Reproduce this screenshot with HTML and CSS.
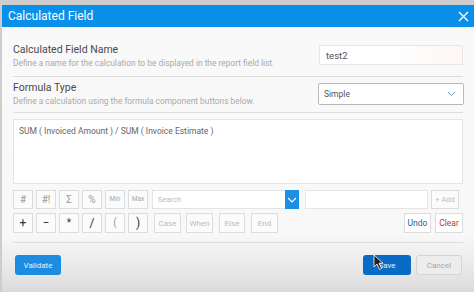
FILE: index.html
```html
<!DOCTYPE html>
<html lang="en">
<head>
    <meta charset="UTF-8">
    <meta name="viewport" content="width=device-width, initial-scale=1.0">
    <title>Calculated Field</title>
    <link rel="stylesheet" href="styles.css">
</head>
<body>
    <div class="dialog">
        <div class="dialog-header">
            <span class="dialog-title">Calculated Field</span>
            <svg class="close" width="11" height="11" viewBox="0 0 11 11"><path d="M1 1L10 10M10 1L1 10" stroke="#fff" stroke-width="1.4"/></svg>
        </div>

        <div class="dialog-body">
            <div class="field-row first">
                <div class="field-text">
                    <div class="field-label">Calculated Field Name</div>
                    <div class="field-desc">Define a name for the calculation to be displayed in the report field list.</div>
                </div>
                <div class="text-input name-input">test2</div>
            </div>

            <div class="field-row second">
                <div class="field-text">
                    <div class="field-label">Formula Type</div>
                    <div class="field-desc">Define a calculation using the formula component buttons below.</div>
                </div>
                <div class="text-input select-input">
                    <span>Simple</span>
                    <svg width="9" height="6" viewBox="0 0 9 6"><path d="M1 1L4.5 4.5L8 1" fill="none" stroke="#7a9ab5" stroke-width="1"/></svg>
                </div>
            </div>

            <div class="formula-box">SUM ( Invoiced Amount ) / SUM ( Invoice Estimate )</div>

            <div class="btn-row">
                <button class="op light">#</button>
                <button class="op light">#!</button>
                <button class="op light">&Sigma;</button>
                <button class="op light">%</button>
                <button class="op tiny">Min</button>
                <button class="op tiny">Max</button>
                <div class="search-group">
                    <div class="search-input">Search</div>
                    <div class="search-drop">
                        <svg width="10" height="6" viewBox="0 0 10 6"><path d="M1 1L5 5L9 1" fill="none" stroke="#fff" stroke-width="1.1"/></svg>
                    </div>
                </div>
                <div class="value-input"></div>
                <button class="word add">+ Add</button>
            </div>

            <div class="btn-row">
                <button class="op">+</button>
                <button class="op">&minus;</button>
                <button class="op small">*</button>
                <button class="op">/</button>
                <button class="op light">(</button>
                <button class="op">)</button>
                <button class="word kw case">Case</button>
                <button class="word kw when">When</button>
                <button class="word kw else">Else</button>
                <button class="word kw end">End</button>
                <button class="word undo">Undo</button>
                <button class="word clear">Clear</button>
            </div>
        </div>

        <div class="dialog-footer">
            <button class="btn btn-validate">Validate</button>
            <div class="footer-right">
                <button class="btn btn-save">Save</button>
                <button class="btn btn-cancel">Cancel</button>
                <svg class="pointer" width="12" height="17" viewBox="0 0 12 17"><path d="M1 1L1 13L4 10L6.5 15.5L8.5 14.5L6 9.2L10 9.2Z" fill="#222" stroke="#fff" stroke-width="0.8"/></svg>
            </div>
        </div>
    </div>
</body>
</html>
```

FILE: styles.css
```css
* {
    box-sizing: border-box;
}
body {
    margin: 0;
    background: #cdcdcd;
    font-family: Roboto, "Liberation Sans", sans-serif;
    color: #444;
    width: 474px;
    height: 292px;
    overflow: hidden;
}
.dialog {
    margin: 5px 0 0 2px;
    height: 287px;
    background: linear-gradient(180deg, #f9f9f9 0%, #f8f8f8 80%, #e4e4e4 95%, #d9d9d9 100%);
}
.dialog-header {
    height: 22px;
    background: #0b90e9;
    display: flex;
    align-items: center;
    justify-content: space-between;
    padding: 0 5px 0 6px;
}
.dialog-title {
    color: #fff;
    font-size: 12px;
}
.close {
    margin-top: 1px;
}
.dialog-body {
    padding: 0 11px 0 11px;
}
.field-row {
    display: flex;
    justify-content: space-between;
    align-items: flex-start;
    border-bottom: 1px solid #dedede;
}
.field-row.first {
    padding: 16px 0 6px 0;
    height: 50px;
}
.field-row.second {
    padding: 4px 0 0 0;
    height: 36px;
}
.field-label {
    font-size: 10.5px;
    line-height: 14px;
    color: #4a4a4a;
}
.field-desc {
    font-size: 8.4px;
    line-height: 12px;
    color: #aaa;
}
.text-input {
    width: 144px;
    height: 20px;
    border: 1px solid #e6e6e6;
    background: #fff;
    font-size: 9.5px;
    padding: 0 6px;
    display: flex;
    align-items: center;
    color: #555;
}
.name-input {
    margin-top: 2px;
    background: linear-gradient(90deg, #fff 0%, #fff 50%, #fdf6f5 100%);
}
.select-input {
    margin-top: 2px;
    height: 22px;
    width: 146px;
    border-color: #b9b9b9;
    border-radius: 2px;
    justify-content: space-between;
    font-size: 8.5px;
    padding: 0 7px 0 5px;
    margin-right: -1px;
}
.formula-box {
    margin-top: 6px;
    height: 65px;
    background: #fff;
    border: 1px solid #e4e4e4;
    font-size: 8.5px;
    color: #666;
    padding: 6px 5px;
}
.btn-row {
    display: flex;
    align-items: center;
    margin-top: 6px;
    height: 19px;
}
.btn-row + .btn-row {
    margin-top: 4px;
    height: 20px;
}
button {
    font-family: Roboto, "Liberation Sans", sans-serif;
    background: #fbfbfb;
    border: 1px solid #dcdcdc;
    padding: 0;
    cursor: pointer;
}
.op {
    width: 20px;
    height: 100%;
    margin-right: 3px;
    font-size: 12px;
    color: #333;
    line-height: 1;
}
.op.light {
    color: #9a9a9a;
    font-size: 10px;
}
.op.small {
    font-size: 10px;
}
.op.tiny {
    color: #a8a8a8;
    font-size: 6.5px;
}
.search-group {
    display: flex;
    height: 100%;
    margin-left: 1px;
}
.search-input {
    width: 133px;
    background: #fff;
    border: 1px solid #e4e4e4;
    border-right: none;
    font-size: 7.5px;
    color: #bbb;
    padding: 0 5px;
    display: flex;
    align-items: center;
}
.search-drop {
    width: 14px;
    background: #1a8fe3;
    display: flex;
    align-items: center;
    justify-content: center;
}
.value-input {
    width: 123px;
    height: 100%;
    margin-left: 6px;
    background: #fff;
    border: 1px solid #e6e6e6;
}
.word {
    height: 100%;
    font-size: 8px;
    color: #bbb;
}
.add {
    width: 28px;
    margin-left: 3px;
    font-size: 7.5px;
}
.kw {
    width: 27px;
    margin-left: 3px;
}
.kw.when {
    margin-left: 5px;
}
.kw.else {
    margin-left: 6px;
    width: 26px;
}
.kw.end {
    margin-left: 6px;
}
.undo {
    margin-left: auto;
    width: 27px;
    color: #2e6193;
    background: #fff;
    font-size: 8.5px;
}
.clear {
    margin-left: 4px;
    width: 28px;
    color: #c0392b;
    background: #fff;
    font-size: 8.5px;
}
.dialog-footer {
    margin: 9px 11px 0 11px;
    border-top: 1px solid #dedede;
    display: flex;
    justify-content: space-between;
    padding-top: 12px;
}
.btn {
    height: 20px;
    border-radius: 3px;
    font-size: 8px;
    border: none;
}
.btn-validate {
    margin-left: 2px;
    width: 46px;
    background: #1b8ce0;
    color: #e8f3fc;
}
.footer-right {
    display: flex;
    position: relative;
}
.btn-save {
    width: 48px;
    background: #0a6bc7;
    color: #e6f0fa;
}
.btn-cancel {
    width: 46px;
    margin-left: 5px;
    margin-right: 1px;
    background: #ededed;
    border: 1px solid #d4d4d4;
    color: #a5a5a5;
}
.pointer {
    position: absolute;
    left: 10px;
    top: -1px;
}
```
